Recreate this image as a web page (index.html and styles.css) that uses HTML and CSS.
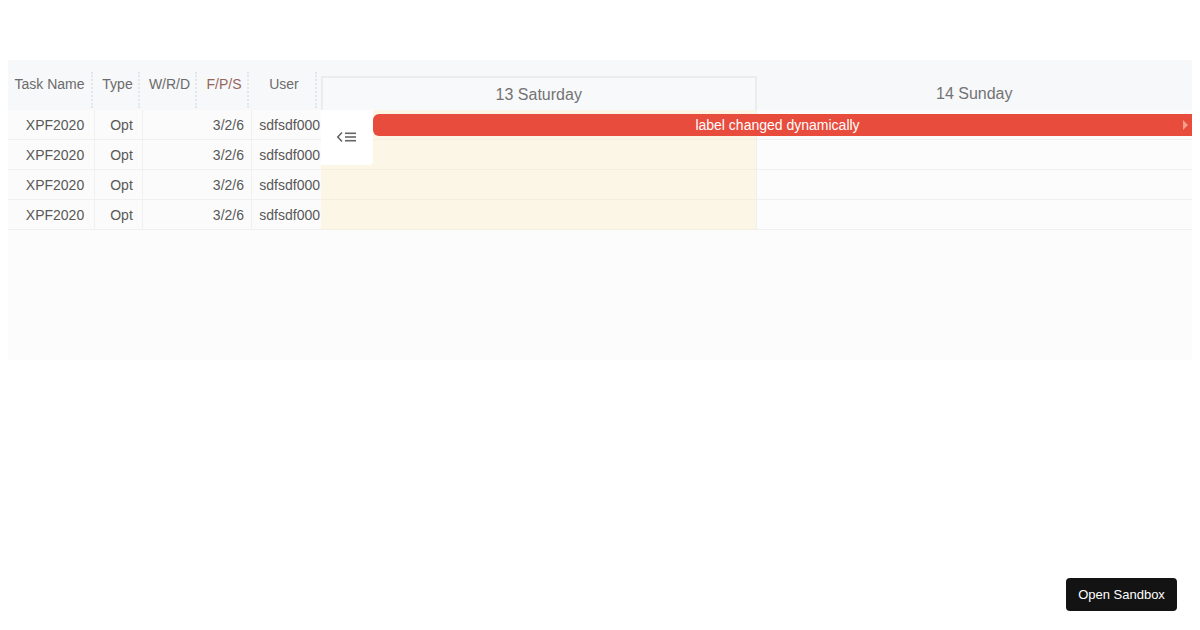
FILE: index.html
```html
<!DOCTYPE html>
<html>
<head>
<meta charset="utf-8">
<link rel="stylesheet" href="styles.css">
</head>
<body>
<div class="page">
  <div class="gantt">
    <div class="table">
      <div class="thead">
        <div class="th c1">Task Name</div>
        <div class="th c2">Type</div>
        <div class="th c3">W/R/D</div>
        <div class="th c4 accent">F/P/S</div>
        <div class="th c5">User</div>
      </div>
      <div class="trow"><div class="td b1">XPF2020</div><div class="td b2">Opt</div><div class="td b3">3/2/6</div><div class="td b4">sdfsdf000</div></div>
      <div class="trow"><div class="td b1">XPF2020</div><div class="td b2">Opt</div><div class="td b3">3/2/6</div><div class="td b4">sdfsdf000</div></div>
      <div class="trow"><div class="td b1">XPF2020</div><div class="td b2">Opt</div><div class="td b3">3/2/6</div><div class="td b4">sdfsdf000</div></div>
      <div class="trow"><div class="td b1">XPF2020</div><div class="td b2">Opt</div><div class="td b3">3/2/6</div><div class="td b4">sdfsdf000</div></div>
    </div>
    <div class="chart">
      <div class="chead">
        <div class="day day-active"><span>13 Saturday</span></div>
        <div class="day"><span>14 Sunday</span></div>
      </div>
      <div class="cbody">
        <div class="col col-sat">
          <div class="cell"></div><div class="cell"></div><div class="cell"></div><div class="cell"></div>
        </div>
        <div class="col">
          <div class="cell"></div><div class="cell"></div><div class="cell"></div><div class="cell"></div>
        </div>
        <div class="bar">label changed dynamically<span class="bar-arrow"></span></div>
        <div class="popup">
          <svg width="22" height="12" viewBox="0 0 22 12">
            <path d="M6 1.5 L1.8 6 L6 10.5" fill="none" stroke="#666" stroke-width="1.6"/>
            <rect x="9" y="1.5" width="11" height="1.6" fill="#666"/>
            <rect x="9" y="5.2" width="11" height="1.6" fill="#666"/>
            <rect x="9" y="8.9" width="11" height="1.6" fill="#666"/>
          </svg>
        </div>
      </div>
    </div>
  </div>
  <div class="footer">
    <button class="sandbox">Open Sandbox</button>
  </div>
</div>
</body>
</html>
```

FILE: styles.css
```css
html, body {
  margin: 0;
  padding: 0;
  background: #ffffff;
  font-family: "Liberation Sans", Arial, sans-serif;
}
.page {
  padding: 60px 8px 0 8px;
  height: 630px;
  box-sizing: border-box;
  display: flex;
  flex-direction: column;
}
.gantt {
  display: flex;
  height: 300px;
  background: #fcfcfc;
}
.table {
  width: 313px;
  flex: none;
}
.thead {
  height: 50px;
  background: #f7f8fa;
  display: flex;
}
.th {
  box-sizing: border-box;
  height: 36px;
  margin-top: 12px;
  padding-top: 4px;
  line-height: 16px;
  font-size: 14px;
  color: #6b6b6b;
  text-align: center;
  border-right: 2px dotted #e0e6e9;
}
.c1 { width: 85px; }
.c2 { width: 47px; padding-left: 4px; }
.c3 { width: 57px; padding-left: 4px; }
.c4 { width: 52px; padding-left: 4px; }
.c5 { width: 68px; padding-left: 4px; }
.accent { color: #94675a; }
.trow {
  display: flex;
  height: 30px;
  box-sizing: border-box;
  border-bottom: 1px solid #f0f0f0;
  background: #fbfbfb;
}
.td {
  box-sizing: border-box;
  padding-top: 1px;
  line-height: 29px;
  font-size: 14px;
  color: #585858;
  border-right: 1px solid #f0f0f0;
  white-space: nowrap;
}
.b1 { width: 87px; text-align: center; padding-left: 8px; }
.b2 { width: 48px; text-align: center; padding-left: 6px; }
.b3 { width: 109px; text-align: right; padding-right: 7px; }
.b4 { width: 69px; text-align: right; padding-right: 1px; border-right: none; }
.chart {
  flex: 1;
  display: flex;
  flex-direction: column;
}
.chead {
  height: 50px;
  display: flex;
  background: #f7f8fa;
}
.day {
  width: 50%;
  flex: none;
  display: flex;
  align-items: center;
  justify-content: center;
  font-size: 16px;
  color: #737373;
  padding-top: 17px;
  box-sizing: border-box;
}
.day-active {
  margin-top: 16px;
  padding-top: 1px;
  border: 2px solid #ebecee;
  border-bottom: none;
  background: #f8f9fb;
}
.cbody {
  position: relative;
  display: flex;
}
.col {
  width: 50%;
  box-sizing: border-box;
}
.col-sat {
  background: #fcf6e6;
  border-right: 1px solid #efefef;
}
.cell {
  height: 30px;
  box-sizing: border-box;
  border-bottom: 1px solid #f0f0f0;
}
.col-sat .cell { border-bottom-color: #f3eee0; }
.bar {
  position: absolute;
  left: 52px;
  right: 0;
  top: 4px;
  height: 22px;
  line-height: 22px;
  background: #e84c3d;
  border-radius: 6px 0 0 6px;
  color: #fff;
  font-size: 14px;
  text-align: center;
  padding-right: 10px;
}
.bar-arrow {
  position: absolute;
  right: 4px;
  top: 6px;
  width: 0;
  height: 0;
  border-top: 5px solid transparent;
  border-bottom: 5px solid transparent;
  border-left: 5px solid #f2a088;
}
.popup {
  position: absolute;
  left: 0;
  top: 0;
  width: 52px;
  height: 55px;
  background: #fff;
  border-radius: 0 0 4px 0;
  display: flex;
  align-items: center;
  justify-content: center;
  padding-bottom: 2px;
  box-sizing: border-box;
}
.footer {
  flex: 1;
  display: flex;
  justify-content: flex-end;
  align-items: flex-end;
  padding-bottom: 19px;
  padding-right: 15px;
}
.sandbox {
  background: #131313;
  color: #fff;
  border: none;
  border-radius: 4px;
  width: 111px;
  height: 33px;
  font-family: "Liberation Sans", Arial, sans-serif;
  font-size: 13px;
  padding: 0;
}
```
